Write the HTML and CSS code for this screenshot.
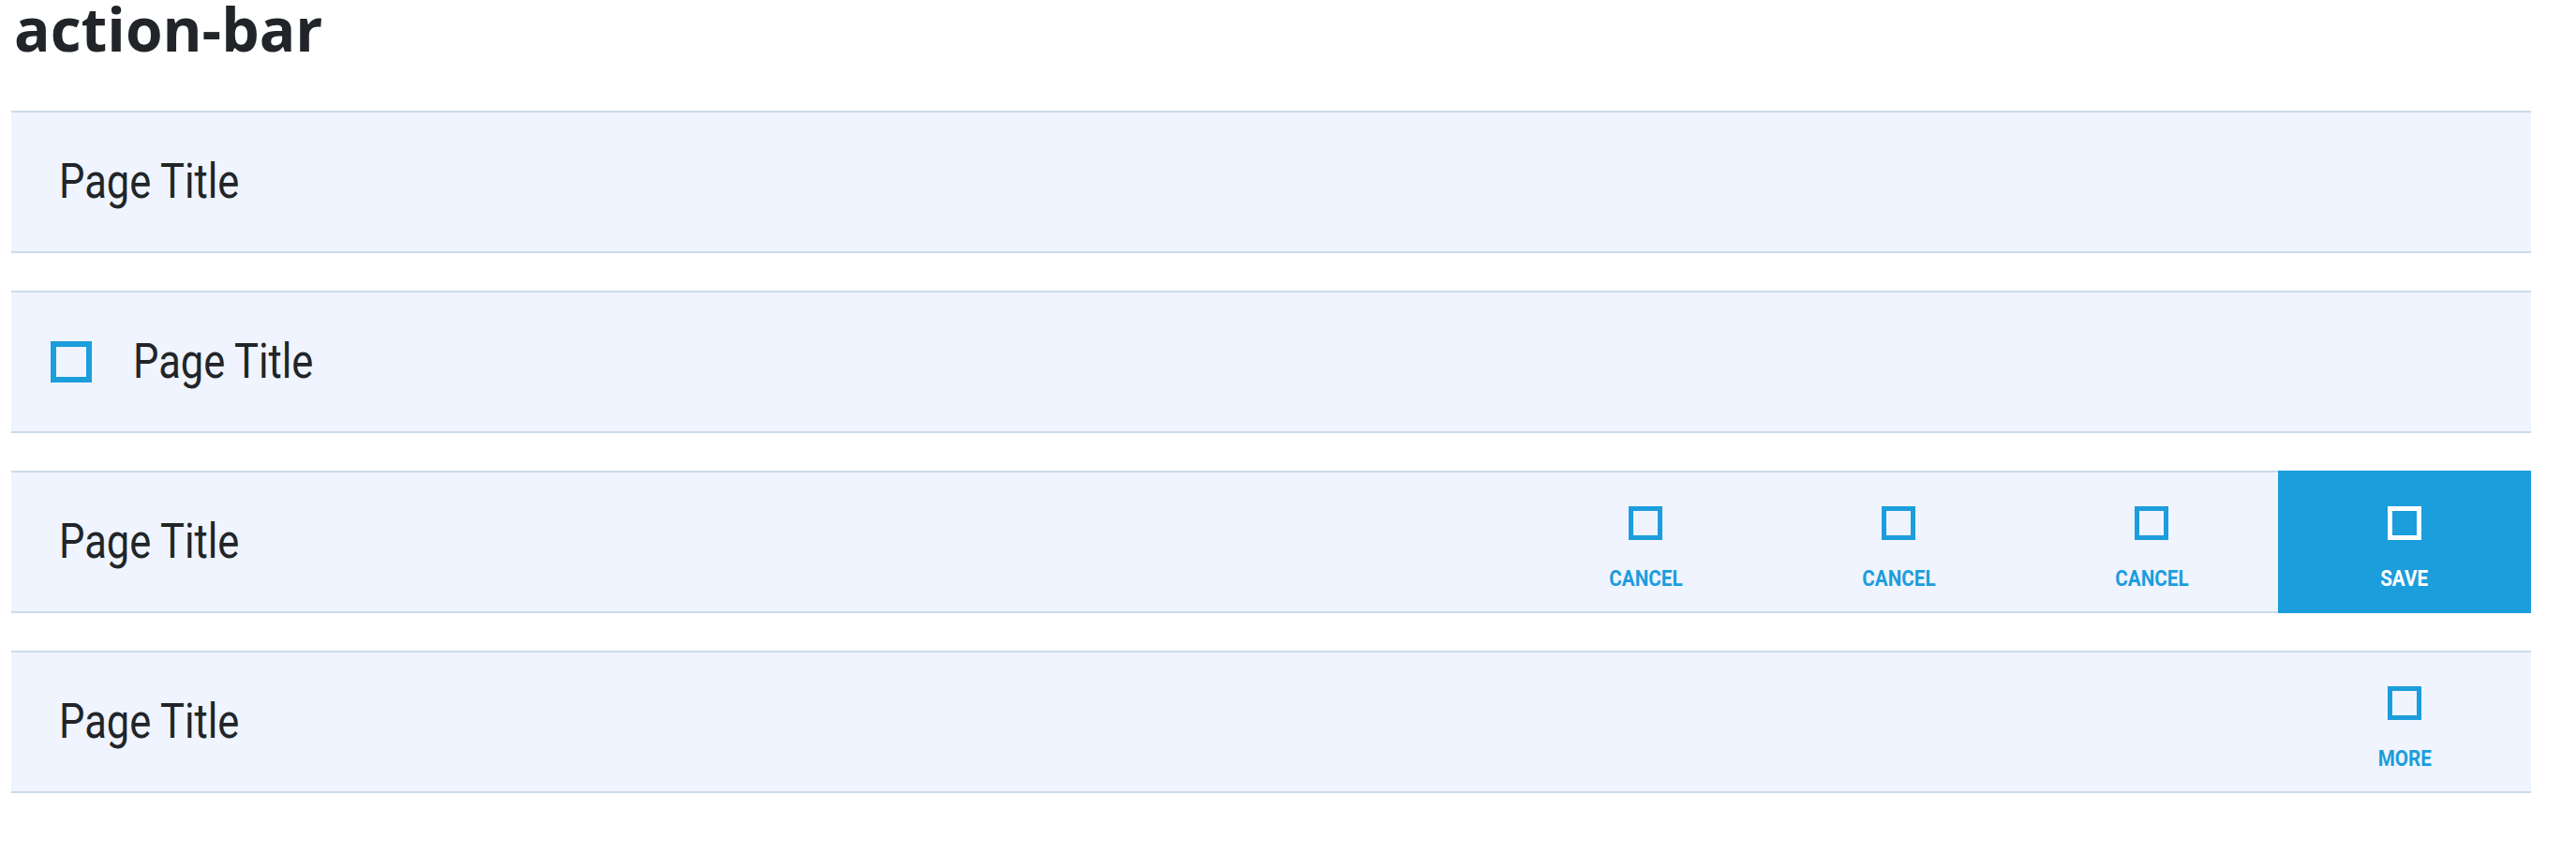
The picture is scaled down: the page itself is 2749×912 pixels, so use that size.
FILE: index.html
```html
<!DOCTYPE html>
<html lang="en">
<head>
<meta charset="utf-8">
<title>action-bar</title>
<link rel="stylesheet" href="styles.css">
</head>
<body>
<main class="page">
  <h1 class="heading">action-bar</h1>

  <section class="action-bar">
    <div class="bar-left">
      <span class="bar-title">Page Title</span>
    </div>
  </section>

  <section class="action-bar">
    <div class="bar-left">
      <span class="checkbox"></span>
      <span class="bar-title">Page Title</span>
    </div>
  </section>

  <section class="action-bar">
    <div class="bar-left">
      <span class="bar-title">Page Title</span>
    </div>
    <div class="bar-actions">
      <button class="action"><span class="action-icon"></span><span class="action-label">CANCEL</span></button>
      <button class="action"><span class="action-icon"></span><span class="action-label">CANCEL</span></button>
      <button class="action"><span class="action-icon"></span><span class="action-label">CANCEL</span></button>
      <button class="action action--primary"><span class="action-icon"></span><span class="action-label">SAVE</span></button>
    </div>
  </section>

  <section class="action-bar">
    <div class="bar-left">
      <span class="bar-title">Page Title</span>
    </div>
    <div class="bar-actions">
      <button class="action"><span class="action-icon"></span><span class="action-label">MORE</span></button>
    </div>
  </section>
</main>
</body>
</html>
```

FILE: styles.css
```css
html, body {
  margin: 0;
  padding: 0;
  background: #ffffff;
}

.page {
  padding: 0 0 0 12px;
  width: 2689px;
  font-family: "Roboto", "Liberation Sans", sans-serif;
  color: #212529;
}

.heading {
  margin: 0 0 56px 3px;
  font-family: "Open Sans", "Noto Sans", sans-serif;
  font-weight: 700;
  font-size: 64px;
  line-height: 62px;
  color: #212529;
}

.action-bar {
  display: flex;
  align-items: stretch;
  justify-content: space-between;
  height: 148px;
  margin-bottom: 40px;
  background: #eff4fe;
  border-top: 2px solid #cddbea;
  border-bottom: 2px solid #cddbea;
}

.bar-left {
  display: flex;
  align-items: center;
  gap: 44px;
  padding-left: 51px;
}

.checkbox {
  display: block;
  flex: none;
  width: 44px;
  height: 44px;
  box-sizing: border-box;
  border: 6px solid #1c9ddc;
  margin-left: -9px;
}

.bar-title {
  display: block;
  font-family: "Roboto", "Liberation Sans", sans-serif;
  font-size: 52px;
  line-height: 60px;
  font-weight: 400;
  color: #212529;
  transform: scaleX(0.835);
  transform-origin: left center;
}

.bar-actions {
  display: flex;
  margin: -2px 0;
}

.action {
  display: flex;
  flex-direction: column;
  align-items: center;
  width: 270px;
  padding: 38px 0 0;
  border: 0;
  margin: 0;
  background: transparent;
  color: #1c9ddc;
  font: inherit;
  cursor: pointer;
}

.action-icon {
  display: block;
  width: 36px;
  height: 36px;
  box-sizing: border-box;
  border: 5px solid currentColor;
}

.action-label {
  display: block;
  margin-top: 27px;
  font-family: "Roboto", "Liberation Sans", sans-serif;
  font-weight: 700;
  font-size: 24px;
  line-height: 28px;
  transform: scaleX(0.86);
}

.action--primary {
  background: #1c9ddc;
  color: #ffffff;
}
```
